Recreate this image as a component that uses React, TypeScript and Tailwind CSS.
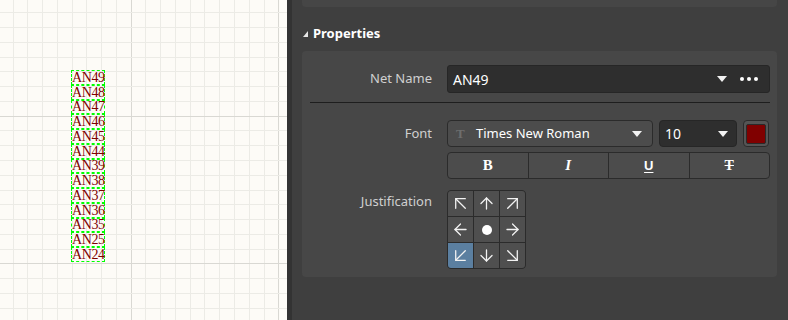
import React from "react";
import { ArrowUpLeft, ArrowUp, ArrowUpRight, ArrowLeft, ArrowRight, ArrowDownLeft, ArrowDown, ArrowDownRight } from "lucide-react";

const labels = ["AN49", "AN48", "AN47", "AN46", "AN45", "AN44", "AN39", "AN38", "AN37", "AN36", "AN35", "AN25", "AN24"];

function Grid() {
  const step = 14.76;
  const xs: number[] = [];
  const ys: number[] = [];
  for (let i = -1; i < 22; i++) xs.push(12.6 + i * step);
  for (let i = -1; i < 23; i++) ys.push(12.4 + i * step);
  return (
    <svg className="absolute inset-0" width="287" height="320">
      <rect width="287" height="320" fill="#fdfbf7" />
      {xs.map((x, i) => (
        <line key={"x" + i} x1={Math.round(x) + 0.5} x2={Math.round(x) + 0.5} y1={0} y2={320} stroke={(i - 1) % 10 === 8 ? "#d9d8d3" : "#ecebe6"} strokeWidth={1} />
      ))}
      {ys.map((y, i) => (
        <line key={"y" + i} y1={Math.round(y) + 0.5} y2={Math.round(y) + 0.5} x1={0} x2={287} stroke={(i - 1) % 10 === 7 ? "#d9d8d3" : "#ecebe6"} strokeWidth={1} />
      ))}
    </svg>
  );
}

function Tri() {
  return (
    <svg width="10" height="6" viewBox="0 0 10 6">
      <path d="M0 0 L10 0 L5 6 Z" fill="#f2f2f2" />
    </svg>
  );
}

function JCell({ children, active }: { children: React.ReactNode; active?: boolean }) {
  return (
    <div className={`flex items-center justify-center ${active ? "bg-[#5b7fa0]" : "bg-[#4f4f4f]"}`}>{children}</div>
  );
}

export default function App() {
  const st = { size: 19, strokeWidth: 1.6, color: "#f2f2f2" };
  const dg = { size: 23, strokeWidth: 1.35, color: "#f2f2f2" };
  return (
    <div className="flex w-[788px] h-[320px] overflow-hidden" style={{ fontFamily: '"Noto Sans", "Open Sans", sans-serif' }}>
      <div className="relative w-[287px] h-full shrink-0">
        <Grid />
        <div className="absolute left-[71px] top-[70px] flex flex-col">
          {labels.map((l) => (
            <div
              key={l}
              className="h-[14.77px] w-[34px] border border-dashed border-[#00ff00] flex items-end leading-[13px] text-[14px] text-[#7d0000] tracking-[-0.4px] overflow-visible whitespace-nowrap"
              style={{ fontFamily: '"Liberation Serif", serif' }}
            >
              {l}
            </div>
          ))}
        </div>
      </div>
      <div className="w-[5px] h-full bg-[#333333] shrink-0" />
      <div className="flex-1 h-full bg-[#3f3f3f] pl-[10px] pr-[11px] flex flex-col">
        <div className="h-[7px] bg-[#464646] rounded-b-[4px]" />
        <div className="h-[44px] flex items-center gap-[5px] pl-[1px] pt-[10px]">
          <svg width="5" height="6" viewBox="0 0 5 6"><path d="M5 0 L5 6 L0 6 Z" fill="#e8e8e8" /></svg>
          <span className="text-[13px] font-bold text-white">Properties</span>
        </div>
        <div className="bg-[#474747] rounded-[4px] pt-[14px] pb-[8px] pr-[7px] flex flex-col">
          <div className="flex items-center">
            <div className="w-[130px] text-right text-[13px] text-[#d0d0d0]">Net Name</div>
            <div className="ml-[15px] flex-1 h-[28px] bg-[#2e2e2e] border border-[#262626] rounded-[3px] flex items-center pl-[5px] pr-[11px]">
              <span className="text-[14px] text-white flex-1">AN49</span>
              <Tri />
              <div className="ml-[13px] flex gap-[3px]">
                <div className="w-[4px] h-[4px] rounded-full bg-white" />
                <div className="w-[4px] h-[4px] rounded-full bg-white" />
                <div className="w-[4px] h-[4px] rounded-full bg-white" />
              </div>
            </div>
          </div>
          <div className="ml-[8px] mt-[9px] h-[1px] bg-[#1e1e1e]" />
          <div className="flex items-center mt-[17px]">
            <div className="w-[130px] text-right text-[13px] text-[#d0d0d0]">Font</div>
            <div className="ml-[15px] w-[206px] h-[27px] bg-[#4c4c4c] border border-[#2b2b2b] rounded-[4px] flex items-center pl-[8px] pr-[10px]">
              <span className="text-[13px] font-bold text-[#6e6e6e] w-[20px]" style={{ fontFamily: '"Liberation Serif", serif' }}>T</span>
              <span className="text-[13px] text-white flex-1">Times New Roman</span>
              <Tri />
            </div>
            <div className="ml-[6px] w-[78px] h-[27px] bg-[#2e2e2e] border border-[#262626] rounded-[4px] flex items-center pl-[5px] pr-[8px]">
              <span className="text-[14px] text-white flex-1">10</span>
              <Tri />
            </div>
            <div className="ml-[6px] w-[26px] h-[27px] bg-[#555555] border border-[#2b2b2b] rounded-[4px] flex items-center justify-center">
              <div className="w-[20px] h-[20px] bg-[#800000] border border-[#2a2a2a] rounded-[2px]" />
            </div>
          </div>
          <div className="ml-[145px] mt-[5px] h-[27px] flex bg-[#4c4c4c] border border-[#2b2b2b] rounded-[4px] overflow-hidden text-white">
            <div className="flex-1 flex items-center justify-center text-[15px] font-bold" style={{ fontFamily: '"Liberation Serif", serif' }}>B</div>
            <div className="flex-1 flex items-center justify-center text-[15px] font-bold italic border-l border-[#2b2b2b]" style={{ fontFamily: '"Liberation Serif", serif' }}>I</div>
            <div className="flex-1 flex items-center justify-center text-[13px] font-bold border-l border-[#2b2b2b] underline underline-offset-[2px]" style={{ fontFamily: '"Liberation Sans", sans-serif' }}>U</div>
            <div className="flex-1 flex items-center justify-center text-[14px] font-bold border-l border-[#2b2b2b] line-through" style={{ fontFamily: '"Liberation Serif", serif' }}>T</div>
          </div>
          <div className="flex items-start mt-[11px]">
            <div className="w-[130px] text-right text-[13px] text-[#d0d0d0] mt-[2px]">Justification</div>
            <div className="ml-[15px] w-[79px] h-[79px] grid grid-cols-3 grid-rows-3 gap-[1px] bg-[#2b2b2b] border border-[#2b2b2b] rounded-[4px] overflow-hidden">
              <JCell><ArrowUpLeft {...dg} /></JCell>
              <JCell><ArrowUp {...st} /></JCell>
              <JCell><ArrowUpRight {...dg} /></JCell>
              <JCell><ArrowLeft {...st} /></JCell>
              <JCell><div className="w-[10px] h-[10px] rounded-full bg-white" /></JCell>
              <JCell><ArrowRight {...st} /></JCell>
              <JCell active><ArrowDownLeft {...dg} /></JCell>
              <JCell><ArrowDown {...st} /></JCell>
              <JCell><ArrowDownRight {...dg} /></JCell>
            </div>
          </div>
        </div>
      </div>
    </div>
  );
}
